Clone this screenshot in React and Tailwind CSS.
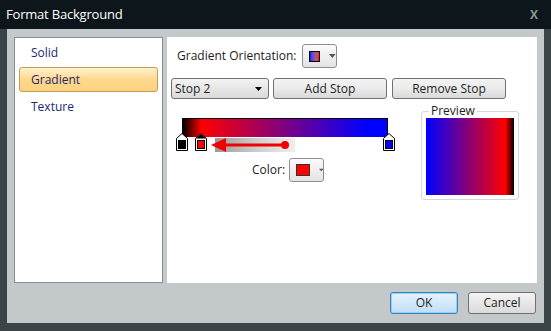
import React from 'react'

function Stop({ color, selected, className }) {
  return (
    <svg width="12" height="18" viewBox="0 0 12 18" className={className}>
      <polygon points="0.5,17.5 0.5,5.5 6,0.5 11.5,5.5 11.5,17.5" fill="#fff" stroke="#000" />
      {selected && <polygon points="1,5.5 6,1 11,5.5" fill="#000" />}
      <rect x="2.5" y="7.5" width="7" height="8" fill={color} stroke="#000" />
    </svg>
  )
}

function DropArrow() {
  return (
    <svg width="7" height="4" viewBox="0 0 7 4">
      <polygon points="0,0 7,0 3.5,4" fill="#555" />
    </svg>
  )
}

function SwatchButton({ children }) {
  return (
    <div className="w-[35px] h-[24px] rounded-[3px] border border-[#8e8f8f] bg-gradient-to-b from-[#fbfbfb] to-[#e3e3e3] flex items-center pl-[6px] gap-[9px]">
      {children}
      <DropArrow />
    </div>
  )
}

function Button({ children, className = '' }) {
  return (
    <div
      className={
        'h-[21px] rounded-[3px] border border-[#707070] bg-gradient-to-b from-[#f3f3f3] via-[#ebebeb] to-[#d9d9d9] flex items-center justify-center text-[12px] text-[#1e1e1e] ' +
        className
      }
    >
      {children}
    </div>
  )
}

export default function App() {
  const items = ['Solid', 'Gradient', 'Texture']

  return (
    <div
      className="w-[551px] h-[331px] bg-[#0d171b] flex flex-col overflow-hidden"
      style={{ fontFamily: '"Open Sans", "Noto Sans", sans-serif' }}
    >
      {/* Title bar */}
      <div className="h-[29px] flex items-center justify-between pl-[6px] pr-[13px] shrink-0">
        <span className="text-white text-[13px] tracking-[-0.2px]">Format Background</span>
        <span className="text-[#8a979c] text-[12px] font-bold">X</span>
      </div>

      {/* Frame */}
      <div className="flex-1 bg-[#3b4548] px-[7px] pb-[8px] flex">
        <div className="flex-1 bg-[#c3c8ca] flex flex-col px-[7px] pt-[8px]">
          <div className="flex h-[246px] gap-[4px]">
            {/* Left list */}
            <div className="w-[149px] bg-white border border-[#8a8e92] px-[4px] pt-[2px] flex flex-col gap-[2px]">
              {items.map((it) =>
                it === 'Gradient' ? (
                  <div
                    key={it}
                    className="h-[25px] rounded-[3px] border border-[#c19b5c] bg-gradient-to-b from-[#fff2cc] via-[#fdd88c] to-[#fcd27e] flex items-center pl-[11px] text-[12px] text-[#1d2670]"
                  >
                    {it}
                  </div>
                ) : (
                  <div key={it} className="h-[25px] flex items-center pl-[12px] text-[12px] text-[#1d2670]">
                    {it}
                  </div>
                )
              )}
            </div>

            {/* Right content */}
            <div className="flex-1 bg-white flex flex-col pt-[7px]">
              <div className="flex items-center pl-[10px] gap-[5px]">
                <span className="text-[12px] text-[#1b1b1b]">Gradient Orientation:</span>
                <SwatchButton>
                  <div className="w-[12px] h-[11px] border border-black bg-gradient-to-r from-[#1010ff] to-[#ff0a0a]" />
                </SwatchButton>
              </div>

              <div className="flex items-center pl-[4px] gap-[4px] mt-[10px]">
                <div className="w-[98px] h-[21px] rounded-[3px] border border-[#707070] bg-gradient-to-b from-[#f3f3f3] to-[#dadada] flex items-center justify-between pl-[3px] pr-[6px] text-[12px] text-[#1e1e1e]">
                  <span>Stop 2</span>
                  <svg width="7" height="4" viewBox="0 0 7 4">
                    <polygon points="0,0 7,0 3.5,4" fill="#000" />
                  </svg>
                </div>
                <Button className="w-[114px]">Add Stop</Button>
                <Button className="w-[114px] ml-[1px]">Remove Stop</Button>
              </div>

              <div className="flex mt-[5px]">
                {/* Gradient editor */}
                <div className="pl-[15px] pt-[14px] flex flex-col">
                  <div className="relative w-[206px] h-[33px]">
                    <div
                      className="w-[206px] h-[19px] border-t border-x border-black"
                      style={{ background: 'linear-gradient(to right, #000 0%, #ff0000 9%, #0000ff 90%, #0000ff 100%)' }}
                    />
                    <Stop color="#000" className="absolute left-[-6px] top-[15px]" />
                    <Stop color="#ff0000" selected className="absolute left-[13px] top-[15px]" />
                    <Stop color="#0000ff" className="absolute left-[201px] top-[15px]" />
                    {/* drag annotation */}
                    <svg width="90" height="20" viewBox="0 0 90 20" className="absolute left-[27px] top-[20px]">
                      <defs>
                        <linearGradient id="shadow" x1="0" x2="1">
                          <stop offset="0" stopColor="#777" stopOpacity="0.75" />
                          <stop offset="1" stopColor="#aaa" stopOpacity="0.2" />
                        </linearGradient>
                      </defs>
                      <rect x="6" y="0" width="80" height="14" fill="url(#shadow)" />
                      <line x1="14" y1="7" x2="76" y2="7" stroke="#f20000" strokeWidth="3" />
                      <polygon points="2,7 17,0 17,14" fill="#f20000" />
                      <circle cx="76" cy="7" r="4" fill="#f20000" />
                    </svg>
                  </div>
                  <div className="flex items-center mt-[7px] pl-[70px] gap-[4px]">
                    <span className="text-[12px] text-[#1b1b1b]">Color:</span>
                    <SwatchButton>
                      <div className="w-[20px] h-[12px] border border-[#333] bg-[#ff0000]" />
                    </SwatchButton>
                  </div>
                </div>

                {/* Preview */}
                <fieldset className="ml-[33px] w-[96px] h-[96px] border border-[#d3d8db] rounded-[3px] px-[4px] pb-[3px]">
                  <legend className="ml-[3px] px-[2px] text-[12px] text-[#1b1b1b] leading-[14px]">Preview</legend>
                  <div
                    className="w-[88px] h-[77px]"
                    style={{ background: 'linear-gradient(to right, #0000ff 0%, #ff0000 90%, #000 100%)' }}
                  />
                </fieldset>
              </div>
            </div>
          </div>

          {/* Bottom buttons */}
          <div className="flex justify-end gap-[10px] mt-[9px] pr-[1px]">
            <div className="w-[68px] h-[22px] rounded-[3px] border border-[#3c7fb1] bg-gradient-to-b from-[#e5f3fd] to-[#c1def5] shadow-[inset_0_0_0_1px_#8fd3f5] flex items-center justify-center text-[12px] text-[#1e1e1e]">
              OK
            </div>
            <div className="w-[68px] h-[22px] rounded-[3px] border border-[#707070] bg-gradient-to-b from-[#f3f3f3] to-[#dadada] flex items-center justify-center text-[12px] text-[#1e1e1e]">
              Cancel
            </div>
          </div>
        </div>
      </div>
    </div>
  )
}
